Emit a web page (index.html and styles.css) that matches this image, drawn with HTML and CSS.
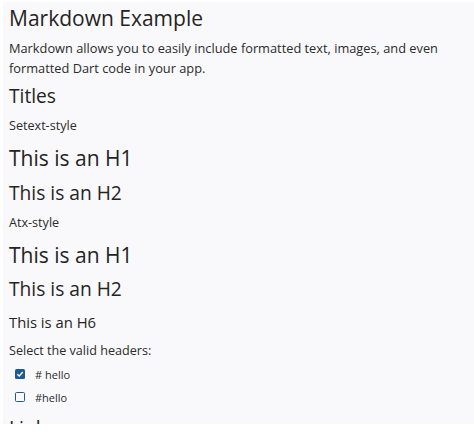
FILE: index.html
```html
<!DOCTYPE html>
<html lang="en">
<head>
<meta charset="utf-8">
<title>Markdown Example</title>
<link rel="stylesheet" href="styles.css">
</head>
<body>
<main class="page">
  <h1 class="title">Markdown Example</h1>
  <p class="para">Markdown allows you to easily include formatted text, images, and even formatted Dart code in your app.</p>
  <h2 class="section">Titles</h2>
  <p class="small setext">Setext-style</p>
  <div class="h1 first">This is an H1</div>
  <div class="h2">This is an H2</div>
  <p class="small atx">Atx-style</p>
  <div class="h1">This is an H1</div>
  <div class="h2 last">This is an H2</div>
  <div class="h6">This is an H6</div>
  <p class="select">Select the valid headers:</p>
  <ul class="tasks">
    <li class="task task-one"><span class="box checked"><svg viewBox="0 0 10 10" width="10" height="10"><path d="M2.3 5.2 L4.2 7 L7.8 3" fill="none" stroke="#fff" stroke-width="1.3"/></svg></span><span class="task-text"># hello</span></li>
    <li class="task"><span class="box"></span><span class="task-text">#hello</span></li>
  </ul>
  <h2 class="section links">Links</h2>
</main>
</body>
</html>
```
FILE: styles.css
```css
html, body {
  margin: 0;
  padding: 0;
  background: #ffffff;
}
.page {
  margin: 2px 0 0 3px;
  height: 422px;
  overflow: hidden;
  box-sizing: border-box;
  padding: 1.5px 0 0 6px;
  background: #f9f9fb;
  font-family: "Open Sans", "Noto Sans", sans-serif;
  color: #242424;
}
.page h1, .page h2, .page p, .page ul, .page div {
  margin: 0;
  font-weight: 400;
}
.title {
  font-size: 21px;
  line-height: 28px;
}
.para {
  font-size: 12.8px;
  line-height: 20px;
  margin-top: 6.5px !important;
  color: #2b2b2b;
}
.section {
  font-size: 19.2px;
  line-height: 26px;
  margin-top: 5.4px !important;
}
.small {
  font-size: 12.6px;
  line-height: 18px;
  color: #2b2b2b;
}
.setext { margin-top: 7.9px !important; }
.atx { margin-top: 7.9px !important; }
.h1 {
  font-size: 21px;
  line-height: 28px;
  margin-top: 8.55px !important;
}
.h2 {
  font-size: 19.2px;
  line-height: 26px;
  margin-top: 8.55px !important;
}
.h2.last { margin-top: 7.55px !important; }
.h6 {
  font-size: 14.8px;
  line-height: 20px;
  margin-top: 9.2px !important;
}
.select {
  font-size: 12.6px;
  line-height: 18px;
  margin-top: 10px !important;
  color: #2b2b2b;
}
.tasks {
  list-style: none;
  padding: 0;
  margin-top: 6.1px !important;
  display: flex;
  flex-direction: column;
  gap: 5px;
}
.task {
  display: flex;
  align-items: center;
  font-size: 11px;
  line-height: 18px;
  padding-left: 6px;
  color: #2b2b2b;
}
.box {
  width: 10px;
  height: 10px;
  box-sizing: border-box;
  border: 1.7px solid #1e5b96;
  border-radius: 1.5px;
  margin-right: 10px;
  display: flex;
  align-items: center;
  justify-content: center;
  position: relative;
  top: -1px;
}
.box.checked {
  background: #1e5b96;
  border: none;
}
.links {
  margin-top: 8px !important;
}
```
